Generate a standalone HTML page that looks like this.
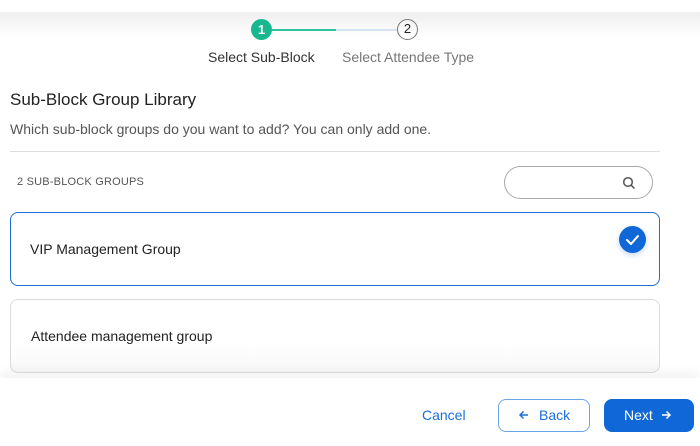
<!DOCTYPE html>
<html><head><style>
*{margin:0;padding:0;box-sizing:border-box}
body{width:700px;height:446px;overflow:hidden;background:#fff;font-family:"Liberation Sans",Arial,sans-serif;position:relative;color:#222}
.topshade{position:absolute;left:0;top:12px;width:700px;height:26px;background:linear-gradient(#efefef,#fff)}
.abs{position:absolute}
.circ{position:absolute;width:21px;height:21px;border-radius:50%;font-size:13px;text-align:center;line-height:21px}
.card{position:absolute;left:10px;width:650px;border-radius:8px;background:#fff}
.footer{position:absolute;left:0;top:378px;width:700px;height:68px;background:#fff;box-shadow:0 -6px 10px rgba(0,0,0,0.05)}
.btn{position:absolute;top:399px;height:33px;border-radius:8px;font-size:14px}
</style></head><body>
<div class="topshade"></div>
<div class="circ" style="left:251px;top:19px;background:#17b890;color:#fff;font-weight:bold">1</div>
<div class="abs" style="left:272px;top:29px;width:64px;height:2px;background:#2ec4a0"></div>
<div class="abs" style="left:336px;top:29px;width:62px;height:2px;background:#d5e4f5"></div>
<div class="circ" style="left:397px;top:19px;border:1.5px solid #777;color:#222;line-height:18px">2</div>
<div class="abs" style="left:208px;top:49px;font-size:14px;color:#333">Select Sub-Block</div>
<div class="abs" style="left:342px;top:49px;font-size:14px;color:#777">Select Attendee Type</div>
<div class="abs" style="left:10px;top:90px;font-size:17px;color:#222">Sub-Block Group Library</div>
<div class="abs" style="left:10px;top:121px;font-size:14px;color:#555">Which sub-block groups do you want to add? You can only add one.</div>
<div class="abs" style="left:10px;top:151px;width:650px;height:1px;background:#ddd"></div>
<div class="abs" style="left:17px;top:176px;font-size:11px;color:#555;letter-spacing:0.2px">2 SUB-BLOCK GROUPS</div>
<div class="abs" style="left:504px;top:166px;width:149px;height:33px;border:1.5px solid #a8a8a8;border-radius:17px"></div>
<svg class="abs" style="left:622px;top:176px" width="14" height="14" viewBox="0 0 14 14"><circle cx="6" cy="6" r="4.3" fill="none" stroke="#555" stroke-width="1.5"/><path d="M9.2 9.2L12.5 12.5" stroke="#555" stroke-width="1.5"/></svg>
<div class="card" style="top:212px;height:74px;border:1.5px solid #1a6fd8"></div>
<div class="abs" style="left:30px;top:241px;font-size:14px;color:#222">VIP Management Group</div>
<div class="abs" style="left:619px;top:226px;width:27px;height:27px;border-radius:50%;background:#0f67d8;box-shadow:0 2px 6px rgba(15,103,216,0.25)"></div>
<svg class="abs" style="left:619px;top:226px" width="27" height="27" viewBox="0 0 27 27"><path d="M8 14l4 4 7-8" fill="none" stroke="#fff" stroke-width="2" stroke-linecap="round" stroke-linejoin="round"/></svg>
<div class="card" style="top:299px;height:74px;border:1px solid #ddd;background:linear-gradient(#fff 60%,#f7f7f7)"></div>
<div class="abs" style="left:31px;top:328px;font-size:14px;color:#222">Attendee management group</div>
<div class="footer"></div>
<div class="abs" style="left:422px;top:407px;font-size:14px;color:#1a6fd8">Cancel</div>
<div class="btn" style="left:498px;width:92px;border:1.5px solid #6aa5ea"></div>
<svg class="abs" style="left:518px;top:409px" width="12" height="12" viewBox="0 0 12 12"><path d="M10 6H2M5.5 2.5L2 6l3.5 3.5" fill="none" stroke="#1a6fd8" stroke-width="1.5"/></svg>
<div class="abs" style="left:539px;top:407px;font-size:14px;color:#1a6fd8">Back</div>
<div class="btn" style="left:604px;width:90px;background:#0f67d8"></div>
<div class="abs" style="left:624px;top:407px;font-size:14px;color:#fff">Next</div>
<svg class="abs" style="left:660px;top:409px" width="12" height="12" viewBox="0 0 12 12"><path d="M2 6h8M6.5 2.5L10 6l-3.5 3.5" fill="none" stroke="#fff" stroke-width="1.5"/></svg>
</body></html>
